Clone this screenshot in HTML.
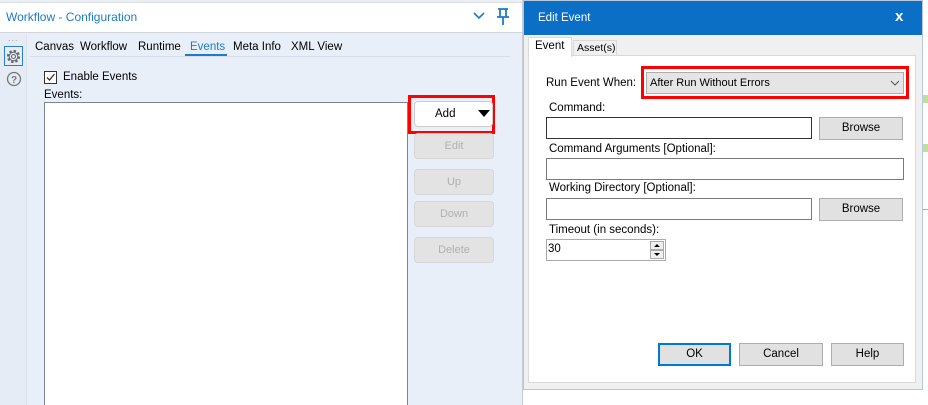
<!DOCTYPE html>
<html><head><style>
*{box-sizing:border-box;margin:0;padding:0}
body{width:928px;height:405px;overflow:hidden;background:#fff;font-family:"Liberation Sans",sans-serif;font-size:12px;color:#000;position:relative}
.a{position:absolute}
.d{font-size:11.5px}
.btn{position:absolute;background:#e1e1e1;border:1px solid #adadad;text-align:center;font-size:11.5px}
.dis{position:absolute;background:#e3e3e3;border:1px solid #d6d6d6;border-radius:4px;color:#b0b0b0;text-align:center;font-size:11px;line-height:24px}
.inp{position:absolute;background:#fff;border:1px solid #7a7a7a}
.t{font-size:11.5px}
</style></head><body>
<div class="a" style="left:0;top:0;width:523px;height:405px;background:#e9eff9;border-right:1px solid #c8ccd2"></div>
<div class="a" style="left:0;top:2px;width:522px;height:31px;background:#fff;border-bottom:1px solid #d0d4da;border-top:1px solid #ddd"></div>
<div class="a" style="left:6px;top:10px;color:#1f7bc7;font-size:12px">Workflow - Configuration</div>
<svg class="a" style="left:473px;top:12px" width="12" height="8"><path d="M1 1 L6 6 L11 1" stroke="#1f7bc7" stroke-width="1.6" fill="none"/></svg>
<svg class="a" style="left:496px;top:8px" width="14" height="18"><path d="M2 1 H12 M4 1 V9 M10 1 V9 M1 9 H13 M7 9 V17" stroke="#1f7bc7" stroke-width="1.8" fill="none"/></svg>
<div class="a" style="left:0;top:34px;width:27px;height:371px;background:#e6ecf5;border-right:1px solid #dde3ec"></div>
<div class="a" style="left:8px;top:33px;color:#999;font-size:9px;letter-spacing:1px">...</div>
<div class="a" style="left:4px;top:46px;width:19px;height:20px;border:1px solid #2c7fcb"></div>
<svg class="a" style="left:5px;top:48px" width="17" height="17"><circle cx="8.5" cy="8.5" r="5.5" stroke="#666" stroke-width="2.2" fill="none" stroke-dasharray="2.4 1.9"/><circle cx="8.5" cy="8.5" r="4.3" stroke="#666" stroke-width="1" fill="none"/><circle cx="8.5" cy="8.5" r="2" stroke="#666" stroke-width="1.1" fill="none"/></svg>
<svg class="a" style="left:6px;top:71px" width="16" height="16"><circle cx="8" cy="8" r="6.5" stroke="#777" stroke-width="1.3" fill="none"/><text x="8" y="12" font-size="10" font-weight="bold" text-anchor="middle" fill="#777" font-family="Liberation Sans">?</text></svg>
<div class="a t" style="left:35px;top:41px">Canvas</div>
<div class="a t" style="left:80px;top:41px">Workflow</div>
<div class="a t" style="left:138px;top:41px">Runtime</div>
<div class="a t" style="left:190px;top:41px;color:#1f7bc7">Events</div>
<div class="a" style="left:185px;top:54px;width:42px;height:2px;background:#1f7bc7"></div>
<div class="a t" style="left:233px;top:41px">Meta Info</div>
<div class="a t" style="left:291px;top:41px">XML View</div>
<div class="a" style="left:30px;top:56px;width:480px;height:1px;background:#d6dde8"></div>
<div class="a" style="left:44px;top:71px;width:13px;height:13px;border:1px solid #333;background:#fff"></div>
<svg class="a" style="left:45px;top:72px" width="11" height="11"><path d="M2 5.5 L4.5 8 L9.5 2" stroke="#333" stroke-width="1.3" fill="none"/></svg>
<div class="a t" style="left:63px;top:71px">Enable Events</div>
<div class="a t" style="left:44px;top:89px">Events:</div>
<div class="a" style="left:44px;top:102px;width:364px;height:303px;background:#fff;border:1px solid #7d8591;border-bottom:none"></div>
<div class="a" style="left:408px;top:95px;width:87px;height:39px;border:3px solid #f00"></div>
<div class="a" style="left:414px;top:101px;width:79px;height:26px;background:#fff;border:1px solid #ccc;border-radius:4px"></div>
<div class="a t" style="left:435px;top:108px">Add</div>
<svg class="a" style="left:478px;top:110px" width="12" height="8"><path d="M0 0 H12 L6 7Z" fill="#000"/></svg>
<div class="dis" style="left:414px;top:133px;width:80px;height:26px">Edit</div>
<div class="dis" style="left:414px;top:169px;width:80px;height:26px">Up</div>
<div class="dis" style="left:414px;top:201px;width:80px;height:26px">Down</div>
<div class="dis" style="left:414px;top:237px;width:80px;height:26px">Delete</div>
<div class="a" style="left:922px;top:48px;width:6px;height:162px;border-bottom:1px solid #aaa"></div>
<div class="a" style="left:923px;top:95px;width:5px;height:8px;background:#bde0a0"></div>
<div class="a" style="left:923px;top:144px;width:5px;height:8px;background:#bde0a0"></div>
<div class="a" style="left:523px;top:0;width:400px;height:390px;background:#f0f0f0;border:1px solid #b8c8dc"></div>
<div class="a" style="left:524px;top:1px;width:398px;height:34px;background:#0b6fc6"></div>
<div class="a d" style="left:538px;top:12px;color:#fff">Edit Event</div>
<div class="a" style="left:895px;top:8px;color:#fff;font-size:15px;font-weight:bold">x</div>
<div class="a" style="left:528px;top:55px;width:388px;height:328px;background:#fff;border:1px solid #d9d9d9"></div>
<div class="a" style="left:528px;top:37px;width:44px;height:20px;background:#fff;border:1px solid #d9d9d9;border-bottom:none"></div>
<div class="a d" style="left:535px;top:40px">Event</div>
<div class="a" style="left:573px;top:40px;width:44px;height:16px;background:#f0f0f0;border:1px solid #d9d9d9"></div>
<div class="a" style="left:577px;top:42px;font-size:10.5px">Asset(s)</div>
<div class="a d" style="left:546px;top:77px">Run Event When:</div>
<div class="a" style="left:641px;top:66px;width:268px;height:33px;border:3px solid #f00"></div>
<div class="a" style="left:646px;top:72px;width:258px;height:22px;background:#e5e5e5;border:1px solid #adadad"></div>
<div class="a" style="left:650px;top:77px;font-size:11px">After Run Without Errors</div>
<svg class="a" style="left:890px;top:80px" width="10" height="6"><path d="M1 1 L5 5 L9 1" stroke="#555" fill="none"/></svg>
<div class="a d" style="left:549px;top:102px">Command:</div>
<div class="inp" style="left:546px;top:117px;width:266px;height:22px;border-color:#333"></div>
<div class="btn" style="left:819px;top:117px;width:84px;height:23px;line-height:21px">Browse</div>
<div class="a d" style="left:549px;top:143px">Command Arguments [Optional]:</div>
<div class="inp" style="left:546px;top:158px;width:358px;height:22px"></div>
<div class="a d" style="left:549px;top:182px">Working Directory [Optional]:</div>
<div class="inp" style="left:546px;top:198px;width:266px;height:22px"></div>
<div class="btn" style="left:819px;top:198px;width:84px;height:23px;line-height:21px">Browse</div>
<div class="a d" style="left:549px;top:224px">Timeout (in seconds):</div>
<div class="inp" style="left:546px;top:239px;width:120px;height:22px;border-color:#aaa"></div>
<div class="a d" style="left:548px;top:243px">30</div>
<div class="a" style="left:650px;top:241px;width:14px;height:9px;border:1px solid #aaa;background:#f0f0f0"></div>
<div class="a" style="left:650px;top:250px;width:14px;height:9px;border:1px solid #aaa;background:#f0f0f0"></div>
<svg class="a" style="left:653px;top:243px" width="8" height="14"><path d="M1 4 H7 L4 1Z M1 10 H7 L4 13Z" fill="#000"/></svg>
<div class="btn" style="left:658px;top:343px;width:73px;height:23px;line-height:19px;border:2px solid #0078d7">OK</div>
<div class="btn" style="left:739px;top:343px;width:84px;height:23px;line-height:21px">Cancel</div>
<div class="btn" style="left:831px;top:343px;width:73px;height:23px;line-height:21px">Help</div>
</body></html>
